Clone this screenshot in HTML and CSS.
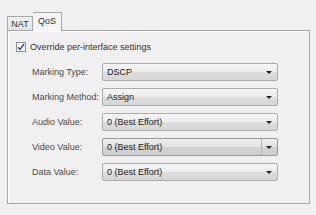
FILE: index.html
```html
<!DOCTYPE html>
<html lang="en">
<head>
    <meta charset="UTF-8">
    <title>QoS Settings</title>
    <link rel="stylesheet" href="styles.css">
</head>
<body>
    <div class="window">
        <div class="tabs">
            <div class="tab">NAT</div>
            <div class="tab active">QoS</div>
        </div>
        <div class="panel">
            <label class="override">
                <span class="check">
                    <svg width="8" height="8" viewBox="0 0 8 8"><path d="M1 4.2 L3 6.5 L7 1" fill="none" stroke="#2a4d9c" stroke-width="1.4"/></svg>
                </span>
                Override per-interface settings
            </label>
            <div class="fields">
                <div class="row">
                    <span class="label">Marking Type:</span>
                    <div class="combo"><span class="value">DSCP</span><span class="arrow"></span></div>
                </div>
                <div class="row">
                    <span class="label">Marking Method:</span>
                    <div class="combo"><span class="value">Assign</span><span class="arrow"></span></div>
                </div>
                <div class="row">
                    <span class="label">Audio Value:</span>
                    <div class="combo"><span class="value">0 (Best Effort)</span><span class="arrow"></span></div>
                </div>
                <div class="row">
                    <span class="label">Video Value:</span>
                    <div class="combo hover"><span class="value">0 (Best Effort)</span><span class="arrow"></span></div>
                </div>
                <div class="row">
                    <span class="label">Data Value:</span>
                    <div class="combo"><span class="value">0 (Best Effort)</span><span class="arrow"></span></div>
                </div>
            </div>
        </div>
    </div>
</body>
</html>
```

FILE: styles.css
```css
body {
    margin: 0;
    background-color: #f0f0f0;
    font-family: "Liberation Sans", Arial, sans-serif;
    font-size: 9px;
    color: #444;
}

.window {
    padding: 12px 6px 0 7px;
}

.tabs {
    display: flex;
    align-items: flex-end;
    height: 18px;
}

.tab {
    box-sizing: border-box;
    height: 14px;
    width: 26px;
    border: 1px solid #a7a7a7;
    border-bottom: none;
    background: linear-gradient(#f2f2f2, #e2e2e2);
    display: flex;
    align-items: center;
    justify-content: center;
    color: #333;
    font-size: 9px;
}

.tab.active {
    position: relative;
    height: 19px;
    width: 29px;
    margin-bottom: -1px;
    border-left: none;
    background: #f5f5f5;
    padding-bottom: 3px;
    z-index: 1;
}

.panel {
    box-sizing: border-box;
    width: 303px;
    height: 174px;
    border: 1px solid #a7a7a7;
    box-shadow: inset 1px 1px #fff;
    padding: 11px 8px 0 8px;
}

.override {
    display: flex;
    align-items: center;
    gap: 4px;
    height: 10px;
    color: #333;
}

.check {
    box-sizing: border-box;
    width: 10px;
    height: 10px;
    border: 1px solid #8e8f8f;
    background: linear-gradient(#f3f3f3, #fdfdfd);
    display: flex;
    align-items: center;
    justify-content: center;
}

.fields {
    display: flex;
    flex-direction: column;
    gap: 7px;
    margin-top: 11px;
    padding-left: 16px;
}

.row {
    display: flex;
    align-items: center;
    height: 18px;
}

.label {
    width: 70px;
    color: #4a4a4a;
}

.combo {
    box-sizing: border-box;
    width: 176px;
    height: 18px;
    border: 1px solid #acacac;
    border-radius: 2px;
    background: linear-gradient(#f6f6f6 0%, #ebebeb 50%, #dddddd 51%, #d6d6d6 100%);
    display: flex;
    align-items: center;
    padding: 0 5px 0 4px;
    color: #222;
}

.combo .value {
    flex: 1;
}

.combo .arrow {
    width: 0;
    height: 0;
    border-left: 3px solid transparent;
    border-right: 3px solid transparent;
    border-top: 3px solid #222;
    margin-top: 1px;
}

.combo.hover {
    border-color: #9a9a9a;
    background: linear-gradient(to right, transparent 158px, #b5b5b5 158px, #b5b5b5 159px, transparent 159px),
        linear-gradient(#eeeeee 0%, #e2e2e2 50%, #d2d2d2 51%, #cecece 100%);
}
```
